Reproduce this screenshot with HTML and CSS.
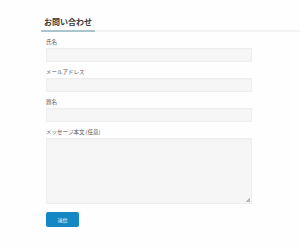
FILE: index.html
```html
<!DOCTYPE html>
<html lang="ja">
<head>
<meta charset="utf-8">
<link rel="stylesheet" href="styles.css">
</head>
<body>
<div class="page">
  <h2 class="title">お問い合わせ</h2>
  <form class="form">
    <label class="label">氏名</label>
    <input class="field" type="text">
    <label class="label">メールアドレス</label>
    <input class="field" type="text">
    <label class="label">題名</label>
    <input class="field" type="text">
    <label class="label">メッセージ本文 (任意)</label>
    <div class="area-wrap">
      <textarea class="field area"></textarea>
      <svg class="grip" width="4" height="4" viewBox="0 0 4 4">
        <rect x="3" y="0" width="1" height="1" fill="#b5b5b5"/>
        <rect x="2" y="1" width="2" height="1" fill="#b5b5b5"/>
        <rect x="1" y="2" width="3" height="1" fill="#b5b5b5"/>
        <rect x="0" y="3" width="4" height="1" fill="#b5b5b5"/>
      </svg>
    </div>
    <button class="submit" type="button">送信</button>
  </form>
</div>
</body>
</html>
```
FILE: styles.css
```css
html, body {
  margin: 0;
  padding: 0;
  background: #fefefe;
}
body {
  font-family: "Noto Sans CJK JP", "Noto Sans", sans-serif;
  color: #444;
}
.page {
  padding: 16px 0 0 41px;
}
.title {
  margin: 0;
  padding: 0 0 5px 3px;
  font-size: 8px;
  line-height: 11px;
  font-weight: bold;
  color: #3a3a3a;
  background: linear-gradient(to right, #a9c5c9 54px, #f1f2f2 54px) left bottom / 100% 2px no-repeat;
}
.form {
  display: flex;
  flex-direction: column;
  align-items: flex-start;
  padding: 7px 0 0 5px;
}
.label {
  display: block;
  font-size: 5.5px;
  line-height: 7px;
  color: #555;
  margin-bottom: 2px;
}
.field {
  display: block;
  box-sizing: border-box;
  width: 206px;
  height: 14px;
  margin: 0 0 7px 0;
  padding: 0;
  border: 1px solid #eeeeee;
  background: #f6f6f6;
  box-shadow: inset 0 1px 1px rgba(0,0,0,0.02);
  outline: none;
}
.area-wrap {
  position: relative;
  margin-bottom: 8px;
}
.area {
  height: 66px;
  margin: 0;
  resize: none;
}
.grip {
  position: absolute;
  right: 2px;
  bottom: 2px;
}
.submit {
  width: 33px;
  height: 15px;
  padding: 0;
  border: none;
  border-radius: 2px;
  background: #1388c2;
  color: #fff;
  font-family: "Noto Sans CJK JP", sans-serif;
  font-size: 5px;
  line-height: 15px;
}
```
